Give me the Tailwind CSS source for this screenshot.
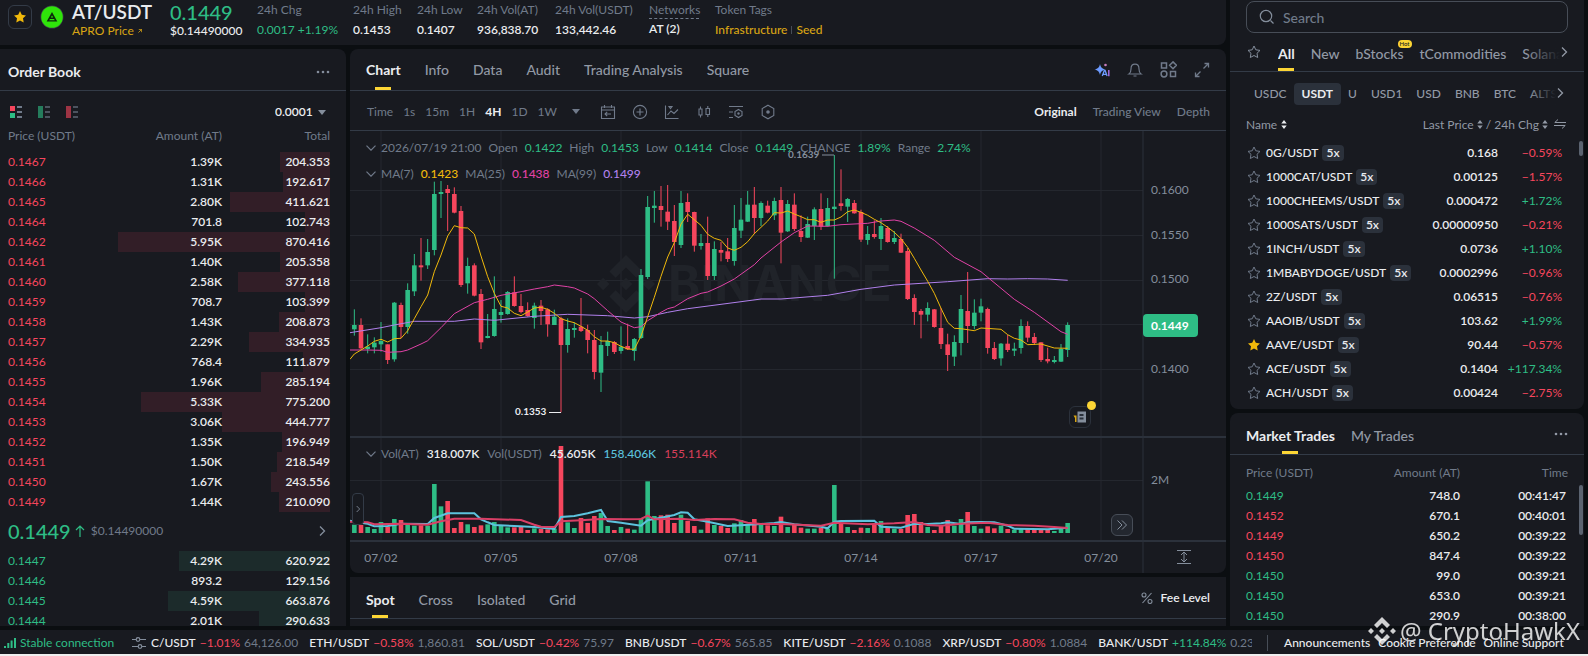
<!DOCTYPE html>
<html lang="en">
<head>
<meta charset="utf-8">
<title>0.1449 | AT/USDT | Spot trading</title>
<script src="https://cdn.jsdelivr.net/npm/@tailwindcss/browser@4"></script>
</head>
<body class="bg-[#0b0e11] font-['Lato','Liberation_Sans',sans-serif] text-xs text-[#eaecef]">
<svg class="hidden">
  <symbol id="star" viewBox="0 0 14 14"><path d="M7 1l1.8 3.8 4.2.6-3 2.9.7 4.2L7 10.5l-3.700 2 .7-4.200-3-2.900 4.200-.6z"/></symbol>
  <symbol id="right" viewBox="0 0 8 12"><path d="M2 1.500l4.500 4.500-4.500 4.500" fill="none" stroke="currentColor" stroke-width="1.300"/></symbol>
  <symbol id="down" viewBox="0 0 10 6"><path d="M.5.7L5 5.200 9.500.7" fill="none" stroke="currentColor" stroke-width="1.200"/></symbol>
  <symbol id="sort" viewBox="0 0 6 10"><path d="M3 0l3 4H0zM3 10l3-4H0z" fill="currentColor"/></symbol>
  <symbol id="caret" viewBox="0 0 8 5"><path d="M0 0h8L4 5z" fill="currentColor"/></symbol>
  <symbol id="dots" viewBox="0 0 14 4"><g fill="currentColor"><circle cx="2" cy="2" r="1.300"/><circle cx="7" cy="2" r="1.300"/><circle cx="12" cy="2" r="1.300"/></g></symbol>
  <symbol id="bnb" viewBox="0 0 28 28"><path d="M14 0l8 8-3 3-5-5-5 5-3-3zM3 11l3 3-3 3-3-3zM25 11l3 3-3 3-3-3zM14 11l3 3-3 3-3-3zM6 20l3-3 5 5 5-5 3 3-8 8z" fill="currentColor"/></symbol>
</svg>

<div class="flex h-screen flex-col">
  <main class="flex min-h-0 flex-1 gap-1 overflow-hidden pr-1">
    <div class="flex min-w-0 flex-1 flex-col gap-1">

      <header class="flex h-[45px] shrink-0 overflow-hidden rounded-br-lg bg-[#181a20] whitespace-nowrap">
        <div class="flex pl-2">
          <button aria-label="Favourite" class="mt-[5px] flex size-6 items-center justify-center rounded-md border border-[#333b47]"><svg class="size-[14px] fill-[#f0b90b]"><use href="#star"/></svg></button>
          <svg class="mt-[5px] ml-2 size-6" viewBox="0 0 24 24"><circle cx="12" cy="12" r="11.500" fill="#3a3f47"/><circle cx="12" cy="12" r="10.800" fill="#2fe40a"/><path d="M12 7l5.300 9.500H6.700z" fill="#0b2a0b"/><path d="M12 10.500l-1.200 2h2.400zM10 14l-.8 1.300h5.600L14 14z" fill="#2fe40a"/></svg>
          <div class="ml-2 w-[98px]">
            <h1 class="h-6 text-[19px] leading-6 font-semibold">AT/USDT</h1>
            <a href="#" class="flex items-center gap-1 leading-[14px] text-[#d9a514]">APRO Price <svg class="size-1" viewBox="0 0 5 5"><path d="M1 .5h3.500V4M4.500.5L.5 4.500" fill="none" stroke="currentColor"/></svg></a>
          </div>
        </div>
        <div class="w-[87px]"><div class="h-6 text-xl leading-6 font-medium text-[#2ebd85]">0.1449</div><div class="leading-[14px] font-medium">$0.14490000</div></div>
        <dl class="flex gap-4 leading-5 text-[#707a8a]">
          <div class="w-20"><dt>24h Chg</dt><dd class="text-[#2ebd85]">0.0017 +1.19%</dd></div>
          <div class="w-12"><dt>24h High</dt><dd class="font-semibold text-[#eaecef]">0.1453</dd></div>
          <div class="w-11"><dt>24h Low</dt><dd class="font-semibold text-[#eaecef]">0.1407</dd></div>
          <div class="w-[62px]"><dt>24h Vol(AT)</dt><dd class="font-semibold text-[#eaecef]">936,838.70</dd></div>
          <div class="w-[78px]"><dt>24h Vol(USDT)</dt><dd class="font-semibold text-[#eaecef]">133,442.46</dd></div>
          <div class="w-[50px]"><dt class="h-[19px] border-b border-dashed border-[#707a8a]">Networks</dt><dd class="font-semibold text-[#eaecef]">AT (2)</dd></div>
          <div><dt>Token Tags</dt><dd class="flex gap-1 font-medium text-[#d9a514]"><a href="#">Infrastructure</a><i class="my-[6px] w-px bg-[#474d57]"></i><a href="#">Seed</a></dd></div>
        </dl>
      </header>

      <div class="flex min-h-0 flex-1 gap-1">
        <section class="w-[346px] shrink-0 overflow-hidden rounded-tr-lg bg-[#181a20]">
          <div class="flex h-[42px] items-center justify-between border-b border-[#333b47] pt-1 pr-4 pl-2">
            <h2 class="text-sm font-bold">Order Book</h2>
            <button aria-label="More" class="text-[#848e9c]"><svg class="h-1 w-[14px]"><use href="#dots"/></svg></button>
          </div>
          <div class="flex h-[38px] items-center gap-4 pt-1 pr-5 pl-[10px]">
            <button aria-label="Both sides"><svg class="size-3" viewBox="0 0 12 12"><path d="M0 0h5v5H0z" fill="#f6465d"/><path d="M0 7h5v5H0z" fill="#2ebd85"/><path d="M7 0h5v2H7zM7 5h5v2H7zM7 10h5v2H7z" fill="#707a8a"/></svg></button>
            <button aria-label="Bids"><svg class="size-3 opacity-60" viewBox="0 0 12 12"><path d="M0 0h5v12H0z" fill="#2ebd85"/><path d="M7 0h5v2H7zM7 5h5v2H7zM7 10h5v2H7z" fill="#707a8a"/></svg></button>
            <button aria-label="Asks"><svg class="size-3 opacity-60" viewBox="0 0 12 12"><path d="M0 0h5v12H0z" fill="#f6465d"/><path d="M7 0h5v2H7zM7 5h5v2H7zM7 10h5v2H7z" fill="#707a8a"/></svg></button>
            <label class="ml-auto flex items-center gap-[5px]"><select aria-label="Tick size" class="appearance-none bg-transparent font-semibold"><option>0.0001</option></select><svg class="h-[5px] w-2 text-[#848e9c]"><use href="#caret"/></svg></label>
          </div>
          <div class="pr-4">
            <table class="w-full table-fixed border-collapse">
              <thead><tr class="h-[14px] leading-[14px] text-[#707a8a]"><th class="w-[110px] pl-2 text-left font-normal whitespace-nowrap">Price (USDT)</th><th class="w-28 text-right font-normal">Amount (AT)</th><th class="text-right font-normal">Total</th></tr><tr class="h-[9px]"></tr></thead>
              <tbody id="asks"></tbody>
            </table>
            <div class="flex h-[39px] items-center pb-[2px] pl-2">
              <strong class="text-xl font-medium text-[#2ebd85]">0.1449</strong>
              <svg class="mx-1 h-3 w-[10px]" viewBox="0 0 10 12"><path d="M5 12V1M1 5l4-4 4 4" fill="none" stroke="#2ebd85" stroke-width="1.200"/></svg>
              <span class="ml-[2px] text-[#707a8a]">$0.14490000</span>
              <button aria-label="More depth" class="mr-1 ml-auto text-[#848e9c]"><svg class="h-3 w-2"><use href="#right"/></svg></button>
            </div>
            <table class="w-full table-fixed border-collapse"><tbody id="bids"></tbody></table>
          </div>
        </section>

        <div class="flex min-w-0 flex-1 flex-col gap-1">
          <section class="flex h-[524px] shrink-0 flex-col overflow-hidden rounded-lg bg-[#181a20]">
            <nav class="flex h-[42px] shrink-0 justify-between border-b border-[#333b47] px-4 text-sm font-medium text-[#9299a5]">
              <div class="flex gap-6">
                <a href="#" class="flex flex-col items-center font-bold text-[#eaecef]"><span class="flex flex-1 items-center pt-1">Chart</span><i class="h-[3px] w-4 bg-[#fcd535]"></i></a>
                <a href="#" class="flex items-center">Info</a><a href="#" class="flex items-center">Data</a><a href="#" class="flex items-center">Audit</a><a href="#" class="flex items-center">Trading Analysis</a><a href="#" class="flex items-center">Square</a>
              </div>
              <div class="flex items-center gap-[17px] text-[#707a8a]">
                <button aria-label="AI"><svg class="size-4" viewBox="0 0 16 16"><path d="M6 2c.8 3.500 2 4.700 5.500 5.500C8 8.300 6.800 9.500 6 13c-.8-3.500-2-4.700-5.500-5.500C4 6.700 5.200 5.500 6 2z" fill="#6d9bff"/><circle cx="11.500" cy="3" r="1.300" fill="#c77dba"/><path d="M8.300 14l2-5.500h.8l2 5.500M9 12.300h3.300" fill="none" stroke="#6d9bff" stroke-width="1.300"/><path d="M14.800 8v6.200" stroke="#a76ee0" stroke-width="1.500"/></svg></button>
                <button aria-label="Alerts"><svg class="size-4" viewBox="0 0 16 16"><path d="M2 12c1.500-1 2-2 2-5 0-3 1.500-4.800 4-4.800S12 4 12 7c0 3 .5 4 2 5zM6.500 14h3" fill="none" stroke="currentColor" stroke-width="1.200"/></svg></button>
                <button aria-label="Layout"><svg class="size-[17px]" viewBox="0 0 17 17"><g fill="none" stroke="currentColor" stroke-width="1.500"><path d="M1.500 2h5v5h-5zM10.500 10.500h5v5h-5zM13 .9l3.400 3.400L13 7.700 9.600 4.300z"/><circle cx="4" cy="13" r="2.900"/></g></svg></button>
                <button aria-label="Full screen"><svg class="size-4" viewBox="0 0 16 16"><path d="M9.500 6.500l5-5M6.500 9.500l-5 5M10.500 1.500h4v4M5.500 14.500h-4v-4" fill="none" stroke="currentColor" stroke-width="1.300"/></svg></button>
              </div>
            </nav>
            <div class="flex h-10 shrink-0 items-center border-b border-[#333b47] px-4 pt-[2px] text-[#707a8a]">
              <div class="flex gap-[10px] pl-px"><button>Time</button><button>1s</button><button>15m</button><button>1H</button><button class="font-bold text-[#eaecef]">4H</button><button>1D</button><button>1W</button></div>
              <button aria-label="More intervals" class="ml-[15px]"><svg class="h-[5px] w-2"><use href="#caret"/></svg></button>
              <div class="ml-5 flex gap-4">
                <button aria-label="Go to date"><svg class="size-4" viewBox="0 0 16 16"><path d="M1.500 3h13v11.500h-13zM1.500 6h13M4.500 1v3M11.500 1v3M11 10H5M7.200 7.800L5 10l2.200 2.200" fill="none" stroke="currentColor" stroke-width="1.100"/></svg></button>
                <button aria-label="Add"><svg class="size-4" viewBox="0 0 16 16"><path d="M8 4.500v7M4.500 8h7" stroke="currentColor" stroke-width="1.200"/><circle cx="8" cy="8" r="6.600" fill="none" stroke="currentColor" stroke-width="1.100"/></svg></button>
                <button aria-label="Indicators"><svg class="size-4" viewBox="0 0 16 16"><path d="M1.500 1.500v13h13M3.500 11l3.500-4 3 2.500 4-4M5 2.500h3L6.500 4.500z" fill="none" stroke="currentColor" stroke-width="1.100"/></svg></button>
                <button aria-label="Candle style"><svg class="size-4" viewBox="0 0 16 16"><path d="M3 5h3v6H3zM10 4.500h3.500v6H10zM4.500 2.500V5M4.500 11v2.500M11.800 2v2.500M11.800 10.500V13" fill="none" stroke="currentColor" stroke-width="1.100"/></svg></button>
                <button aria-label="Chart settings"><svg class="size-4" viewBox="0 0 16 16"><path d="M1 2.500h14M1 8h4M1 13.500h4M10.500 5.500l3.500 2v4l-3.500 2-3.500-2v-4z" fill="none" stroke="currentColor" stroke-width="1.100"/><circle cx="10.500" cy="9.500" r="1.200" fill="currentColor"/></svg></button>
                <button aria-label="Settings"><svg class="size-4" viewBox="0 0 16 16"><path d="M8 1.200l5.800 3.400v6.800L8 14.800l-5.800-3.400V4.600z" fill="none" stroke="currentColor" stroke-width="1.100"/><circle cx="8" cy="8" r="1.800" fill="currentColor"/></svg></button>
              </div>
              <div class="ml-auto flex gap-4"><button class="font-bold text-[#eaecef]">Original</button><button class="font-medium">Trading View</button><button class="font-medium">Depth</button></div>
            </div>
            <div class="relative min-h-0 flex-1">
              <svg class="size-full" viewBox="350 131 876 442" preserveAspectRatio="none" aria-label="AT/USDT 4 hour candles">
                <g stroke="#24272e" stroke-width="1"><path d="M381 131v410M501 131v410M621 131v410M741 131v410M861 131v410M981 131v410M1101 131v410M350 190.500h793M350 235.500h793M350 280.500h793M350 324.500h793M350 369.500h793M350 480.500h793" fill="none"/></g>
                <g fill="#202329"><svg x="597" y="254" width="58" height="60" viewBox="0 0 28 28" color="#202329"><use href="#bnb"/></svg><text x="668" y="301" class="font-['Inter',sans-serif] text-[49px] font-bold">BINANCE</text></g>
                <path d="M350 437h876M350 541h876" stroke="#2b313b" stroke-width="2"/><path d="M1143 131v442" stroke="#2b313b"/>
                <g id="candles"></g>
                <g class="text-xs" fill="#848e9c"><text x="1151" y="194">0.1600</text><text x="1151" y="239">0.1550</text><text x="1151" y="283">0.1500</text><text x="1151" y="373">0.1400</text><text x="1151" y="484">2M</text>
                  <g text-anchor="middle"><text x="381" y="562">07/02</text><text x="501" y="562">07/05</text><text x="621" y="562">07/08</text><text x="741" y="562">07/11</text><text x="861" y="562">07/14</text><text x="981" y="562">07/17</text><text x="1101" y="562">07/20</text></g></g>
                <rect x="1143" y="314" width="55" height="23" rx="4" fill="#2ebd85"/><text x="1151" y="330" fill="#fff" class="text-xs font-bold">0.1449</text>
                <g class="text-[10px] font-bold"><text x="788" y="158" fill="#848e9c">0.1639</text><path d="M822 155h12" stroke="#848e9c"/><text x="515" y="415" fill="#eaecef">0.1353</text><path d="M549 412.500h12" stroke="#eaecef"/></g>
                <path d="M1177 550.500h14M1177 563.500h14M1184 552v10M1181 555l3-3 3 3M1181 559l3 3 3-3" fill="none" stroke="#848e9c"/>
              </svg>
              <div class="absolute top-[7px] left-4 flex h-5 items-center gap-[7px] whitespace-nowrap text-[#707a8a]"><span class="flex items-center gap-[5px]"><svg class="h-[6px] w-[10px]"><use href="#down"/></svg>2026/07/19 21:00</span><span>Open</span><b class="font-normal text-[#2ebd85]">0.1422</b><span>High</span><b class="font-normal text-[#2ebd85]">0.1453</b><span>Low</span><b class="font-normal text-[#2ebd85]">0.1414</b><span>Close</span><b class="font-normal text-[#2ebd85]">0.1449</b><span>CHANGE</span><b class="font-normal text-[#2ebd85]">1.89%</b><span>Range</span><b class="font-normal text-[#2ebd85]">2.74%</b></div>
              <div class="absolute top-[33px] left-4 flex h-5 items-center gap-[7px] whitespace-nowrap text-[#707a8a]"><span class="flex items-center gap-[5px]"><svg class="h-[6px] w-[10px]"><use href="#down"/></svg>MA(7)</span><b class="font-medium text-[#f0b90b]">0.1423</b><span>MA(25)</span><b class="font-medium text-[#e042a6]">0.1438</b><span>MA(99)</span><b class="font-medium text-[#b080ec]">0.1499</b></div>
              <div class="absolute top-[313px] left-4 flex h-5 items-center gap-2 whitespace-nowrap text-[#707a8a]"><span class="flex items-center gap-[5px]"><svg class="h-[6px] w-[10px]"><use href="#down"/></svg>Vol(AT)</span><b class="font-semibold text-[#eaecef]">318.007K</b><span>Vol(USDT)</span><b class="font-semibold text-[#eaecef]">45.605K</b><b class="font-medium text-[#5cc3dd]">158.406K</b><b class="font-normal text-[#d93f5a]">155.114K</b></div>
              <button aria-label="Expand tools" class="absolute top-[362px] left-[2px] flex h-8 w-3 items-center justify-center rounded-sm border border-[#333b47] bg-[#181a20] text-[#848e9c]"><svg class="h-2 w-[6px]"><use href="#right"/></svg></button>
              <button aria-label="Scroll to latest" class="absolute top-[383px] right-[93px] flex size-[22px] items-center justify-center rounded-md border border-[#474d57] bg-[#23272f] text-[#848e9c]"><svg class="size-3" viewBox="0 0 12 12"><path d="M1.500 1.500L6 6l-4.500 4.500M6 1.500L10.500 6 6 10.500" fill="none" stroke="currentColor"/></svg></button>
              <button aria-label="News" class="absolute top-[275px] right-[135px] flex size-[22px] items-center justify-center rounded-md border border-[#2b313b] bg-[#181a20]"><svg class="size-[14px]" viewBox="0 0 14 14"><path d="M4.500 1.500H13v11H4.500z" fill="#848e9c"/><path d="M6.500 4h4v2h-4zM6.500 7.500h4v2h-4z" fill="#2b313b"/><path d="M.5 5.500h3V12H2V8z" fill="#d9a514"/></svg><i class="absolute -top-[6px] -right-[6px] size-[9px] rounded-full bg-[#fcd535]"></i></button>
            </div>
          </section>

          <section class="min-h-0 flex-1 overflow-hidden bg-[#181a20]">
            <div class="flex h-[42px] justify-between border-b border-[#333b47] px-4">
              <nav class="flex gap-6 text-sm font-medium text-[#9299a5]">
                <a href="#" class="flex flex-col items-center font-bold text-[#eaecef]"><span class="flex flex-1 items-center pt-2">Spot</span><i class="h-[3px] w-4 bg-[#fcd535]"></i></a><a href="#" class="flex items-center pt-1">Cross</a><a href="#" class="flex items-center pt-1">Isolated</a><a href="#" class="flex items-center pt-1">Grid</a>
              </nav>
              <a href="#" class="flex items-center gap-2 pt-px font-semibold"><svg class="size-3" viewBox="0 0 12 12"><g fill="none" stroke="#848e9c" stroke-width="1.100"><circle cx="3" cy="3" r="2"/><circle cx="9" cy="9.500" r="2"/><path d="M10.500 1L1.500 11"/></g></svg>Fee Level</a>
            </div>
          </section>
        </div>
      </div>
    </div>

    <aside class="flex w-[354px] shrink-0 flex-col gap-1 whitespace-nowrap">
      <section class="h-[409px] shrink-0 overflow-hidden rounded-b-lg bg-[#181a20]">
        <div class="px-4 pt-px">
          <label class="flex h-8 items-center gap-2 rounded-lg border border-[#474d57] px-3"><svg class="size-4" viewBox="0 0 16 16"><g fill="none" stroke="#848e9c" stroke-width="1.200"><circle cx="7" cy="7" r="5.700"/><path d="M11.500 11.500l3 3"/></g></svg><input type="search" aria-label="Search markets" placeholder="Search" class="min-w-0 flex-1 bg-transparent pt-[2px] text-sm font-medium outline-none placeholder:text-[#707a8a]"></label>
        </div>
        <nav class="flex h-[39px] items-stretch border-b border-[#333b47] pr-4 pl-[17px] text-sm font-medium text-[#9299a5]">
          <button aria-label="Favourites" class="mr-[17px]"><svg class="size-[14px] fill-none stroke-[#848e9c]"><use href="#star"/></svg></button>
          <div class="relative flex min-w-0 flex-1 gap-4 overflow-hidden">
            <a href="#" class="flex flex-col items-center font-bold text-[#eaecef]"><span class="flex flex-1 items-center pt-[6px]">All</span><i class="h-[3px] w-4 bg-[#fcd535]"></i></a>
            <a href="#" class="flex items-center pt-[3px]">New</a>
            <a href="#" class="relative flex items-center pt-[3px]">bStocks<span class="absolute top-[7px] -right-2 flex h-2 items-center rounded bg-[#fcd535] px-[2px] text-[6px] text-[#181a20]">Hot</span></a>
            <a href="#" class="flex items-center pt-[3px]">tCommodities</a><a href="#" class="flex items-center pt-[3px]">Solana</a>
            <i class="absolute inset-y-0 right-0 w-9 bg-gradient-to-r from-transparent to-[#181a20]"></i>
          </div>
          <button aria-label="More categories"><svg class="h-3 w-2"><use href="#right"/></svg></button>
        </nav>
        <div class="flex h-[43px] items-center pr-5 pl-[17px] font-medium text-[#9299a5]">
          <div class="relative flex h-[22px] min-w-0 flex-1 overflow-hidden"><button class="px-[7px] pt-px">USDC</button><button class="rounded bg-[#2b313b] px-2 pt-px font-bold text-[#eaecef]">USDT</button><button class="px-[7px] pt-px">U</button><button class="px-[7px] pt-px">USD1</button><button class="px-[7px] pt-px">USD</button><button class="px-[7px] pt-px">BNB</button><button class="px-[7px] pt-px">BTC</button><button class="px-[7px] pt-px">ALTS</button><i class="absolute inset-y-0 right-0 w-7 bg-gradient-to-r from-transparent to-[#181a20]"></i></div>
          <button aria-label="More quotes" class="pb-[2px]"><svg class="h-3 w-2"><use href="#right"/></svg></button>
        </div>
        <div class="flex">
          <table class="min-w-0 flex-1 border-collapse">
            <thead><tr class="h-[26px] text-[#9299a5]"><th class="pb-[6px] pl-4 text-left font-normal">Name <svg class="ml-px inline h-[9px] w-[6px] align-baseline text-[#eaecef]"><use href="#sort"/></svg></th><th colspan="2" class="pb-[6px] text-right font-normal">Last Price <svg class="inline h-[9px] w-[6px] align-baseline"><use href="#sort"/></svg>&nbsp;/ 24h Chg <svg class="inline h-[9px] w-[6px] align-baseline"><use href="#sort"/></svg><svg class="ml-[6px] inline h-[10px] w-3 align-baseline" viewBox="0 0 12 10"><path d="M12 3.500H.8L4 .5M0 6.500h11.200L8 9.500" fill="none" stroke="currentColor"/></svg></th></tr></thead>
            <tbody id="pairs"></tbody>
          </table>
          <div class="w-[18px] pt-[26px] pl-[13px]"><i class="block h-[15px] w-1 rounded-full bg-[#5b6370]"></i></div>
        </div>
      </section>

      <section class="min-h-0 flex-1 overflow-hidden rounded-t-lg bg-[#181a20]">
        <nav class="flex h-[42px] gap-4 border-b border-[#333b47] px-4 text-sm font-medium text-[#9299a5]">
          <a href="#" class="flex flex-col items-center font-bold text-[#eaecef]"><span class="flex flex-1 items-center pt-2">Market Trades</span><i class="h-[3px] w-4 bg-[#fcd535]"></i></a><a href="#" class="flex items-center pt-1">My Trades</a>
          <button aria-label="More" class="ml-auto"><svg class="h-1 w-[14px]"><use href="#dots"/></svg></button>
        </nav>
        <div class="flex pt-[6px]">
          <table class="min-w-0 flex-1 table-fixed border-collapse">
            <thead><tr class="h-[25px] leading-5 text-[#707a8a]"><th class="w-[110px] pb-[2px] pl-4 text-left font-normal">Price (USDT)</th><th class="w-30 pb-[2px] text-right font-normal">Amount (AT)</th><th class="pb-[2px] text-right font-normal">Time</th></tr></thead>
            <tbody id="trades"></tbody>
          </table>
          <div class="w-4 pt-6 pl-[11px]"><i class="block h-[50px] w-1 rounded-full bg-[#5b6370]"></i></div>
        </div>
      </section>
    </aside>
  </main>

  <footer class="mt-1 flex h-6 shrink-0 items-center bg-[#181a20] pt-[2px] whitespace-nowrap">
    <div class="flex w-32 items-center gap-1 pl-1 text-[#2ebd85]"><svg class="h-[10px] w-3" viewBox="0 0 12 10"><path d="M0 8h2v2H0zM3.300 5h2v5h-2zM6.600 2.500h2V10h-2zM10 0h2v10h-2z" fill="currentColor"/></svg>Stable connection</div>
    <button aria-label="Ticker settings" class="ml-1"><svg class="h-3 w-[14px]" viewBox="0 0 14 12"><g fill="none" stroke="#848e9c" stroke-width="1.200"><path d="M0 2.500h4M8 2.500h6M0 9.500h6M10 9.500h4"/><circle cx="6" cy="2.500" r="1.800"/><circle cx="8" cy="9.500" r="1.800"/></g></svg></button>
    <ul id="ticker" class="ml-[5px] flex min-w-0 flex-1 gap-[11px] overflow-hidden"></ul>
    <nav class="ml-[15px] flex w-[321px] shrink-0 gap-2 border-l border-[#474d57] pl-4 font-medium"><a href="#">Announcements</a><a href="#">Cookie Preference</a><a href="#">Online Support</a></nav>
  </footer>
  <div class="h-[2px] shrink-0 bg-[#eeeeee]"></div>
</div>

<div class="pointer-events-none fixed right-2 bottom-[9px] flex items-center gap-1 font-['Noto_Sans',sans-serif] text-2xl text-white/80"><svg class="size-7"><use href="#bnb"/></svg>@ CryptoHawkX</div>

<script>
const el = id => document.getElementById(id);
const UP = '#2ebd85', DOWN = '#f6465d';

// Depth rows: the bar behind a row is as long as its total.
const depth = (rows, ink, bar) => rows.map(([p, a, t]) =>
  `<tr class="h-5" style="background:linear-gradient(to left, ${bar} ${Math.round(parseFloat(t) / 4.11)}px, transparent 0)"><td class="w-[110px] pl-2 ${ink}">${p}</td><td class="w-28 text-right font-semibold">${a}</td><td class="text-right font-semibold">${t}</td></tr>`).join('');
el('asks').innerHTML = depth([
  ['0.1467','1.39K','204.353'],['0.1466','1.31K','192.617'],['0.1465','2.80K','411.621'],['0.1464','701.8','102.743'],['0.1462','5.95K','870.416'],['0.1461','1.40K','205.358'],['0.1460','2.58K','377.118'],['0.1459','708.7','103.399'],['0.1458','1.43K','208.873'],['0.1457','2.29K','334.935'],['0.1456','768.4','111.879'],['0.1455','1.96K','285.194'],['0.1454','5.33K','775.200'],['0.1453','3.06K','444.777'],['0.1452','1.35K','196.949'],['0.1451','1.50K','218.549'],['0.1450','1.67K','243.556'],['0.1449','1.44K','210.090']
], 'text-[#f6465d]', '#321e27');
el('bids').innerHTML = depth([['0.1447','4.29K','620.922'],['0.1446','893.2','129.156'],['0.1445','4.59K','663.876'],['0.1444','2.01K','290.633']], 'text-[#2ebd85]', '#1c2b2b');

el('pairs').innerHTML = [
  ['0G','0.168','-0.59'],['1000CAT','0.00125','-1.57'],['1000CHEEMS','0.000472','+1.72'],['1000SATS','0.00000950','-0.21'],['1INCH','0.0736','+1.10'],['1MBABYDOGE','0.0002996','-0.96'],['2Z','0.06515','-0.76'],['AAOIB','103.62','+1.99'],['AAVE','90.44','-0.57'],['ACE','0.1404','+117.34'],['ACH','0.00424','-2.75'],['ACM','0.4210','-0.85']
].map(([n, p, c]) => `<tr class="h-6"><td class="pl-[17px] font-medium"><span class="flex items-center gap-[5px]"><svg class="size-[14px] ${n === 'AAVE' ? 'fill-[#f0b90b]' : 'fill-none stroke-[#707a8a]'}"><use href="#star"/></svg>${n}/USDT<span class="-ml-px rounded-sm bg-[#2b313b] px-1 leading-4 font-semibold">5x</span></span></td><td class="text-right font-semibold">${p}</td><td class="w-[68px] pr-1 text-right ${c[0] === '+' ? 'text-[#2ebd85]' : 'text-[#f6465d]'}">${c.replace('-', '−')}%</td></tr>`).join('');

el('trades').innerHTML = [
  ['0.1449','748.0','00:41:47',1],['0.1452','670.1','00:40:01',0],['0.1449','650.2','00:39:22',0],['0.1450','847.4','00:39:22',0],['0.1450','99.0','00:39:21',1],['0.1450','653.0','00:39:21',1],['0.1450','290.9','00:38:00',1]
].map(([p, a, t, u]) => `<tr class="h-5"><td class="pl-4 ${u ? 'text-[#2ebd85]' : 'text-[#f6465d]'}">${p}</td><td class="text-right font-semibold">${a}</td><td class="pr-[2px] text-right font-semibold">${t}</td></tr>`).join('');

el('ticker').innerHTML = [
  ['C/USDT','-1.01','64,126.00'],['ETH/USDT','-0.58','1,860.81'],['SOL/USDT','-0.42','75.97'],['BNB/USDT','-0.67','565.85'],['KITE/USDT','-2.16','0.1088'],['XRP/USDT','-0.80','1.0884'],['BANK/USDT','+114.84','0.2331']
].map(([n, c, p]) => `<li class="flex gap-1"><span class="font-medium">${n}</span><span class="${c[0] === '+' ? 'text-[#2ebd85]' : 'text-[#f6465d]'}">${c.replace('-', '−')}%</span><span class="text-[#707a8a]">${p}</span></li>`).join('');

// Candles: direction, high, body top, body bottom, low, volume top. One unit is a third of a pixel.
const C = `G 478 525 538 557 284|R 505 525 595 598 285|G 553 590 597 610 291|G 562 578 592 610 297|G 516 573 583 605 276|R 583 583 630 642 290|G 456 458 628 635 267|R 458 465 531 565 270|G 400 420 531 551 285|G 312 346 424 438 287|R 264 346 352 392 286|G 267 306 346 357 287|G 95 132 300 316 162|G 93 126 132 204 229|R 105 117 129 243 213|R 112 132 188 190 294|R 168 183 405 411 276|G 323 348 400 431 283|R 340 346 437 439 291|R 417 432 577 597 286|G 492 558 564 565 283|G 379 477 558 560 276|G 450 486 495 518 287|G 423 426 492 494 292|R 379 427 468 470 292|R 432 468 486 490 291|R 457 480 498 500 300|G 458 467 504 536 295|R 450 467 483 525 297|R 475 478 523 560 298|G 479 500 525 525 296|R 500 505 585 787 48|G 505 537 585 608 277|G 517 534 540 563 294|R 444 530 543 546 264|R 524 540 570 610 279|R 540 570 666 688 258|G 558 585 668 726 249|G 545 573 588 618 288|R 573 576 606 612 300|G 529 590 603 611 291|R 521 588 598 600 296|G 564 567 603 632 299|G 357 375 564 567 266|G 138 171 381 387 154|G 123 167 174 218 258|R 108 168 180 230 256|R 105 185 215 240 254|R 165 213 276 318 279|G 123 159 285 294 254|R 130 156 186 216 273|R 185 186 287 305 288|G 252 279 288 299 299|R 200 279 378 390 265|G 274 297 378 390 285|R 276 300 308 334 288|R 264 304 327 336 294|G 165 234 333 347 280|G 144 209 242 264 270|G 123 164 215 216 285|R 111 164 204 252 267|G 154 159 204 228 284|R 152 167 188 190 286|G 143 153 196 210 288|R 111 150 248 340 260|G 150 162 244 246 291|R 130 164 237 243 284|R 196 243 261 276 293|G 200 222 263 264 296|G 172 178 228 270 296|R 130 177 230 240 293|G 144 174 228 230 296|G 15 170 177 386 165|R 58 160 168 182 281|G 144 147 170 216 291|R 150 159 190 191 300|R 179 186 269 276 293|G 228 252 270 284 294|R 211 252 261 266 283|G 204 228 267 300 273|R 228 234 276 278 293|G 243 264 276 282 296|R 251 267 308 309 297|R 294 303 447 450 255|R 433 444 486 525 252|R 477 483 494 565 276|G 457 474 494 514 291|R 477 478 531 533 300|R 474 534 582 597 287|R 551 583 615 663 270|G 556 576 620 648 287|G 435 477 579 616 267|R 366 483 528 579 246|G 448 488 528 538 288|G 446 469 488 514 296|R 473 477 594 611 289|R 576 594 627 630 295|G 579 581 625 647 287|R 555 581 600 606 297|G 578 596 602 618 299|G 508 528 594 611 297|R 514 528 563 576 297|R 549 561 579 585 298|R 576 577 630 636 299|R 593 627 634 640 299|G 618 630 636 640 303|G 582 597 635 636 297|G 517 525 600 621 279`.split('|').map(s => s.split(' '));
const X = u => (340 + u / 3).toFixed(1), Y = v => 150 + v / 3, V = v => 430 + v / 3;
let out = '';
C.forEach(([d, h, t, b, l, v], i) => {
  const x = 340 + (43 + 20 * i) / 3, c = d === 'G' ? UP : DOWN;
  out += `<g fill="${c}"><rect x="${x - .5}" y="${Y(+h)}" width="1" height="${(l - h) / 3}"/><rect x="${x - 2.3}" y="${Y(+t)}" width="4.600" height="${Math.max(1.5, (b - t) / 3)}"/><rect x="${x - 2.3}" y="${V(+v)}" width="4.600" height="${(309 - v) / 3}"/></g>`;
});
const line = (pts, color, f, w) => {
  out += `<polyline fill="none" stroke="${color}" stroke-width="${w}" points="${pts.split(' ').map(p => { const [a, b] = p.split(','); return X(+a) + ',' + f(+b).toFixed(1); }).join(' ')}"/>`;
};
line('30,548 123,533 163,525 223,514 343,514 403,507 463,511 583,499 683,493 803,497 883,504 923,500 983,487 1043,476 1203,455 1263,447 1323,447 1463,436 1563,418 1663,405 1823,395 1943,386 2003,387 2063,386 2123,387 2183,391', '#b080ec', Y, 1);
line('30,600 83,600 123,601 143,607 183,605 203,600 243,582 263,572 303,533 343,491 403,458 443,448 483,436 543,425 583,417 623,410 643,405 683,410 703,414 743,432 763,446 803,482 843,516 883,533 903,530 923,512 963,487 983,476 1003,471 1043,446 1083,430 1103,426 1143,408 1183,387 1243,344 1263,324 1323,276 1363,248 1403,228 1463,229 1503,224 1583,220 1623,213 1663,210 1683,214 1723,234 1783,271 1843,322 1923,365 2023,448 2083,487 2163,545 2183,553', '#e042a6', Y, 1);
line('30,628 43,612 63,600 83,588 103,574 123,568 143,576 163,566 183,565 203,542 223,506 243,470 263,435 283,365 303,315 323,258 343,227 363,233 383,234 403,252 423,318 443,380 463,430 483,469 503,474 523,490 543,497 563,486 583,474 603,472 623,478 643,490 663,506 683,513 703,518 723,529 743,541 763,560 783,573 803,573 823,578 843,589 863,597 883,598 903,558 923,500 943,442 963,379 983,321 1003,278 1023,222 1043,193 1083,226 1103,253 1123,265 1143,271 1163,294 1183,301 1203,292 1223,275 1243,251 1283,213 1303,188 1323,189 1343,183 1363,192 1383,200 1403,209 1423,209 1443,217 1463,210 1483,210 1503,201 1523,185 1543,180 1563,187 1583,196 1603,208 1623,218 1643,232 1663,247 1683,266 1703,292 1723,325 1743,360 1763,394 1783,430 1803,475 1823,517 1843,535 1863,536 1903,542 1923,534 1983,538 2003,554 2023,565 2043,570 2063,584 2103,582 2143,594 2183,595', '#f0b90b', Y, 1);
line('30,272 63,278 83,281 103,289 143,288 183,281 263,282 283,264 323,250 403,250 423,268 443,277 463,285 523,288 583,291 643,297 663,261 703,258 743,250 783,240 803,273 843,278 903,287 923,271 963,263 1003,255 1023,247 1043,248 1063,268 1103,275 1163,288 1203,286 1263,282 1303,279 1323,276 1363,283 1443,290 1463,295 1483,275 1503,273 1603,272 1623,290 1683,293 1723,281 1763,282 1803,280 1823,277 1863,282 1883,277 1923,276 1963,277 2003,287 2023,296 2123,298 2183,293', '#5cc3dd', V, 2);
line('30,275 83,277 103,283 183,281 263,284 303,274 343,266 423,266 543,270 583,284 603,290 643,291 663,274 723,271 783,267 863,268 903,267 923,257 943,268 1023,266 1063,270 1123,267 1183,268 1223,278 1263,282 1323,282 1443,287 1483,278 1583,283 1663,280 1723,276 1763,285 1803,287 1863,281 1943,278 2003,285 2083,287 2143,291 2183,294', '#d93f66', V, 2);
el('candles').innerHTML = out;
</script>
</body>
</html>
